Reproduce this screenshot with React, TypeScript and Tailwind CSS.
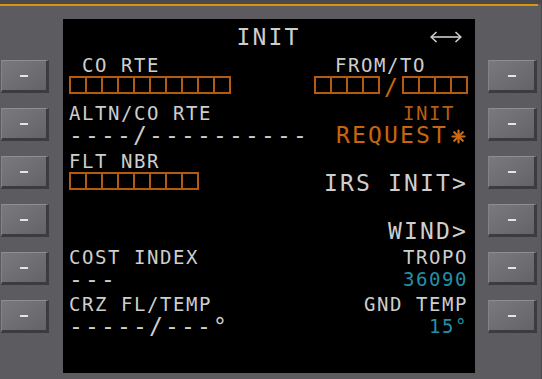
import React from 'react';

const L = "text-[23px] leading-[24px] tracking-[2.15px]";
const S = "text-[19px] leading-[20px] tracking-[1.56px]";
const SD = "text-[19px] leading-[24px] tracking-[1.56px]";

function Key() {
  return (
    <div className="w-full h-[33px] flex items-center justify-center bg-gradient-to-br from-[#7a797e] to-[#646368] border-t border-l border-t-[#8e8d92] border-l-[#838287] border-r-[3px] border-b-[3px] border-r-[#3c3b40] border-b-[#3c3b40]">
      <div className="w-[8px] h-[2px] bg-[#e4e4e4]" />
    </div>
  );
}

// row of empty entry boxes, drawn as orange grid lines
function Boxes({ n }: { n: number }) {
  return (
    <div className="flex gap-[2px] p-[2px] mt-[1px] bg-[#b65a0f]">
      {Array.from({ length: n }).map((_, i) => (
        <div key={i} className="w-[14px] h-[14px] bg-black" />
      ))}
    </div>
  );
}

function Star() {
  return (
    <svg width="15" height="15" viewBox="0 0 15 15" className="inline-block ml-[3px] mr-[2px] align-[-1px]">
      <g stroke="#d06a12" strokeWidth="2.2" strokeLinecap="round">
        <line x1="7.5" y1="1.5" x2="7.5" y2="13.5" />
        <line x1="1.5" y1="7.5" x2="13.5" y2="7.5" />
        <line x1="3.2" y1="3.2" x2="11.8" y2="11.8" />
        <line x1="11.8" y1="3.2" x2="3.2" y2="11.8" />
      </g>
    </svg>
  );
}

function Row({ children }: { children: React.ReactNode }) {
  return <div className="h-[47.8px] flex flex-col">{children}</div>;
}

export default function App() {
  return (
    <div className="w-[542px] h-[379px] bg-[#5c5b60] overflow-hidden border-r border-[#48474c] font-['DejaVu_Sans_Mono',monospace] text-[#cecece]">
      <div className="h-[4px] bg-[#4a494e]" />
      <div className="h-[2px] bg-[#d8960c] mr-[3px]" />

      <div className="flex items-start">
        {/* Left line select keys */}
        <div className="w-[48px] ml-[1px] mt-[54px] flex flex-col gap-[15px]">
          {[0, 1, 2, 3, 4, 5].map((i) => (
            <Key key={i} />
          ))}
        </div>

        {/* CDU screen */}
        <div className="w-[412px] h-[354px] ml-[14px] mt-[13px] bg-black pt-[6px] pl-[6px] pr-[7px]">
          <div className="grid grid-cols-[1fr_auto_1fr] items-center h-[24px]">
            <div />
            <span className={L}>INIT</span>
            <div className="flex justify-end pr-[6px]">
              <svg width="32" height="12" viewBox="0 0 32 12">
                <g stroke="#cecece" strokeWidth="1.6" fill="none">
                  <line x1="1" y1="6" x2="31" y2="6" />
                  <polyline points="6.5,1 1.2,6 6.5,11" />
                  <polyline points="25.5,1 30.8,6 25.5,11" />
                </g>
              </svg>
            </div>
          </div>

          <div className="mt-[6.4px]">
            <Row>
              <div className={"flex justify-between h-[20px] whitespace-pre " + S}>
                <span> CO RTE</span>
                <span className="pr-[3px]">FROM/TO   </span>
              </div>
              <div className="flex justify-between items-start h-[24px]">
                <Boxes n={10} />
                <div className="flex items-start">
                  <Boxes n={4} />
                  <span className={"w-[22px] text-center tracking-normal text-[#c8650e] " + L}>/</span>
                  <Boxes n={4} />
                </div>
              </div>
            </Row>

            <Row>
              <div className={"flex justify-between h-[20px] whitespace-pre " + S}>
                <span>ALTN/CO RTE</span>
                <span className="text-[#b85c10]">INIT </span>
              </div>
              <div className="flex justify-between items-start h-[24px]">
                <span className={L}>----/----------</span>
                <span className={"text-[#c8650e] " + L}>
                  REQUEST
                  <Star />
                </span>
              </div>
            </Row>

            <Row>
              <div className={"flex justify-between h-[20px] " + S}>
                <span>FLT NBR</span>
              </div>
              <div className="flex justify-between items-start h-[24px]">
                <Boxes n={8} />
                <span className={L}>IRS INIT&gt;</span>
              </div>
            </Row>

            <Row>
              <div className="h-[20px]" />
              <div className="flex justify-end items-start h-[24px]">
                <span className={L}>WIND&gt;</span>
              </div>
            </Row>

            <Row>
              <div className={"flex justify-between h-[20px] " + S}>
                <span>COST INDEX</span>
                <span>TROPO</span>
              </div>
              <div className="flex justify-between items-start h-[24px]">
                <span className={L}>---</span>
                <span className={"text-[#2290a8] " + SD}>36090</span>
              </div>
            </Row>

            <Row>
              <div className={"flex justify-between h-[20px] " + S}>
                <span>CRZ FL/TEMP</span>
                <span>GND TEMP</span>
              </div>
              <div className="flex justify-between items-start h-[24px]">
                <span className={L}>-----/---°</span>
                <span className={"text-[#2290a8] " + SD}>15°</span>
              </div>
            </Row>
          </div>
        </div>

        {/* Right line select keys */}
        <div className="w-[49px] ml-[13px] mt-[54px] flex flex-col gap-[15px]">
          {[0, 1, 2, 3, 4, 5].map((i) => (
            <Key key={i} />
          ))}
        </div>
      </div>
    </div>
  );
}
